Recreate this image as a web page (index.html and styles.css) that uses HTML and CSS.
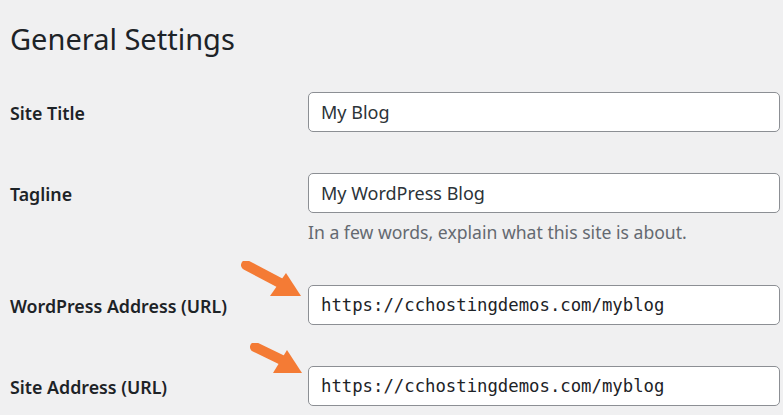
FILE: index.html
```html
<!DOCTYPE html>
<html lang="en">
<head>
    <meta charset="UTF-8">
    <meta name="viewport" content="width=device-width, initial-scale=1.0">
    <title>General Settings</title>
    <link rel="stylesheet" href="styles.css">
</head>
<body>
    <div class="wrap">
        <h1>General Settings</h1>
        <form class="settings">
            <div class="form-row">
                <label for="blogname">Site Title</label>
                <div class="field">
                    <input type="text" id="blogname" value="My Blog">
                </div>
            </div>
            <div class="form-row">
                <label for="blogdescription">Tagline</label>
                <div class="field">
                    <input type="text" id="blogdescription" value="My WordPress Blog">
                    <p class="description">In a few words, explain what this site is about.</p>
                </div>
            </div>
            <div class="form-row">
                <label for="siteurl">WordPress Address (URL)</label>
                <svg class="pointer pointer-1" width="66" height="40" viewBox="0 0 66 40">
                    <line x1="6" y1="4" x2="42" y2="23" />
                    <polygon points="46,12 61,35 30,35" />
                </svg>
                <div class="field">
                    <input type="text" id="siteurl" class="code" value="https://cchostingdemos.com/myblog">
                </div>
            </div>
            <div class="form-row">
                <label for="home">Site Address (URL)</label>
                <svg class="pointer pointer-2" width="56" height="32" viewBox="0 0 56 32">
                    <line x1="5" y1="4" x2="36" y2="19" />
                    <polygon points="37,7 52,30 23,30" />
                </svg>
                <div class="field">
                    <input type="text" id="home" class="code" value="https://cchostingdemos.com/myblog">
                </div>
            </div>
        </form>
    </div>
</body>
</html>
```

FILE: styles.css
```css
body {
    margin: 0;
    background-color: #f0f0f1;
    color: #1d2327;
    font-family: "Noto Sans", "Open Sans", sans-serif;
}
.wrap {
    padding: 0 3px 0 10px;
}
h1 {
    margin: 0;
    padding-top: 18px;
    font-size: 29px;
    font-weight: 400;
    line-height: 42px;
    color: #1d2327;
}
.settings {
    margin-top: 32px;
}
.form-row {
    position: relative;
    display: grid;
    grid-template-columns: 298px 1fr;
    align-items: start;
    margin-bottom: 41px;
}
.form-row:last-child {
    margin-bottom: 0;
}
.form-row label {
    padding-top: 8px;
    font-size: 17.8px;
    font-weight: 600;
    line-height: 26px;
    color: #1d2327;
}
.field input {
    display: block;
    width: 100%;
    height: 40px;
    box-sizing: border-box;
    padding: 0 12px;
    border: 1px solid #8c8f94;
    border-radius: 5px;
    background-color: #fff;
    font-family: inherit;
    font-size: 18px;
    color: #2c3338;
}
.field input.code {
    font-family: "DejaVu Sans Mono", monospace;
    font-size: 17.3px;
    color: #1d2327;
}
.description {
    margin: 7px 0 0;
    font-size: 17.6px;
    line-height: 24px;
    color: #646970;
}
.pointer {
    position: absolute;
}
.pointer line {
    stroke: #f47b35;
    stroke-width: 10;
    stroke-linecap: round;
}
.pointer polygon {
    fill: #f47b35;
}
.pointer-1 {
    left: 230px;
    top: -24px;
}
.pointer-2 {
    left: 240px;
    top: -23px;
}
```
